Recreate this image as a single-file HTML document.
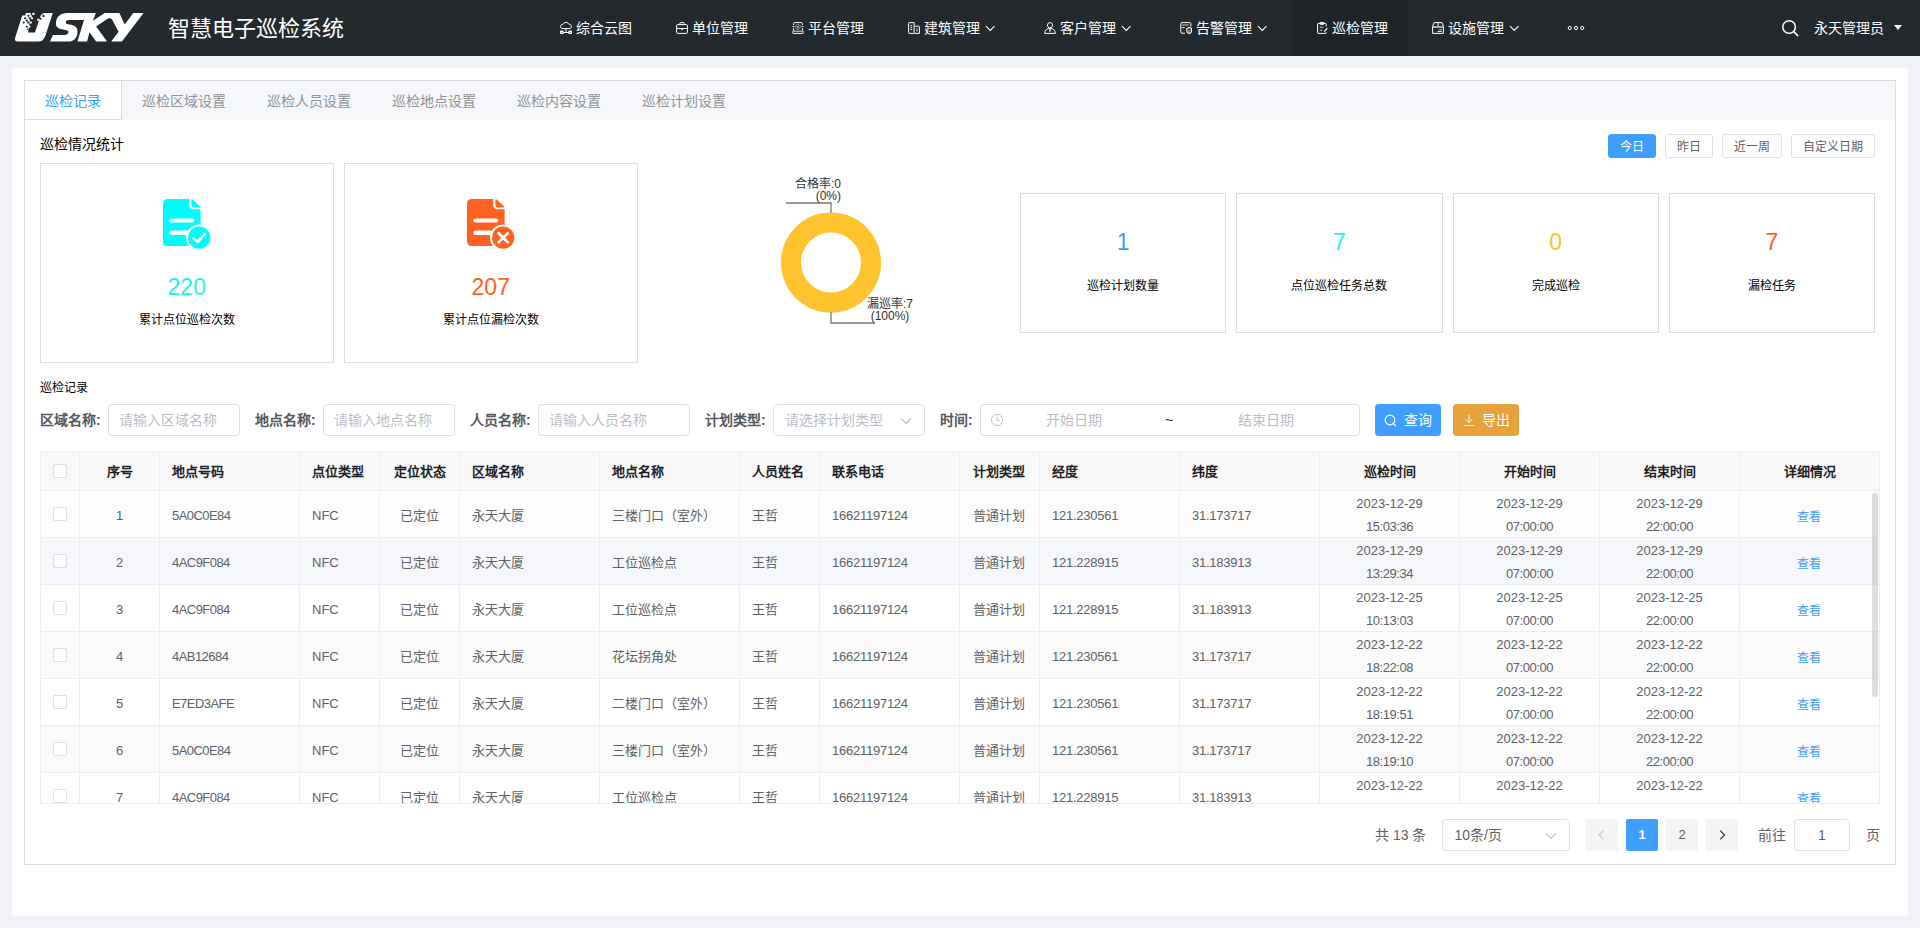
<!DOCTYPE html>
<html lang="zh-CN">
<head>
<meta charset="utf-8">
<title>智慧电子巡检系统</title>
<style>
*{box-sizing:border-box;margin:0;padding:0}
html,body{width:1920px;height:928px;overflow:hidden}
body{font-family:"Liberation Sans",sans-serif;font-size:14px;color:#606266;background:#f0f2f5;position:relative}
svg{display:block}
/* ---------- header ---------- */
.hdr{position:absolute;left:0;top:0;width:1920px;height:56px;background:#24292e}
.logo{position:absolute;left:0;top:0}
.sys{position:absolute;left:168px;top:0;height:56px;line-height:57px;font-size:22px;color:#fff;white-space:nowrap}
.nav{position:absolute;left:536px;top:0;height:56px;display:flex}
.mi{height:56px;line-height:56px;padding:0 20px;color:#fff;font-size:14px;display:flex;align-items:center;white-space:nowrap}
.mi.act{background:#1f2428}
.mi{flex:none;width:116px;overflow:hidden}
.mi.sub{width:136px}
.mi .tx{flex:none;width:56px;overflow:visible}
.mi .ic,.mi .ar{flex:none}
.mi .ic{width:20px;height:12px;display:flex;align-items:center;justify-content:center}
.mi .ar{margin-left:4px;width:16px;height:16px}
.srch{position:absolute;left:1781px;top:19px}
.usr{position:absolute;left:1814px;top:0;height:56px;line-height:56px;color:#fff;font-size:14px;white-space:nowrap}
.caret{position:absolute;left:1894px;top:25px;width:0;height:0;border-left:4px solid transparent;border-right:4px solid transparent;border-top:5px solid #fff}

.fl{top:404px;height:32px;line-height:32px;font-size:14px;font-weight:bold;color:#55585d;white-space:nowrap}
.inp{top:404px;height:32px;border:1px solid #dcdfe6;border-radius:4px;background:#fff;line-height:30px;font-size:14px;color:#babec7;padding-left:9.5px;white-space:nowrap}
.btn{top:404px;height:32px;border-radius:4px;color:#fff;font-size:14px;line-height:32px;white-space:nowrap}
.btn span{position:absolute;top:0}
.btn svg{position:absolute}
/* table */
.tbl{left:40px;top:451px;width:1840px;height:353px;border:1px solid #ebeef5;border-right:none;overflow:hidden;background:#fff}
.tr{display:flex;height:47px;border-bottom:1px solid #ebeef5;font-size:13px;color:#606266}
.tr.h{height:39px;background:#f8f8f9;color:#1f2225;font-weight:bold}
.tr.s{background:#fafafa}
.tr:not(.h) .cb{position:relative;top:-1px}
.tr:not(.h)>div{padding-top:2px}
.tr>div{flex:none;border-right:1px solid #ebeef5;height:100%;display:flex;align-items:center;padding:0 12px;white-space:nowrap;line-height:23px}
.tr>div.ce{justify-content:center;text-align:center;padding-left:0;padding-right:0}
.tr>div.dt{flex-direction:column;justify-content:center;padding:2px 0 0}
.w40{width:39px}.w80{width:80px}.w140{width:140px}
.cb{width:14px;height:14px;border:1px solid #dcdfe6;border-radius:2px;background:#fff}
.lk{color:#409eff;font-size:12px;position:relative;top:2px;left:-1px}
.tm{letter-spacing:-.45px}.n1{letter-spacing:-.25px}.n2{letter-spacing:-.55px}
.sb{left:1872px;top:493px;width:6px;height:204px;border-radius:3px;background:rgba(144,147,153,.3)}
/* pagination */
.pg{top:819px;height:32px;line-height:32px;font-size:14px;color:#606266;white-space:nowrap}
.pb{top:819px;width:32px;height:32px;border-radius:2px;background:#f4f4f5;text-align:center;line-height:32px;font-size:13px;color:#606266}
/* ---------- page ---------- */
.page{position:absolute;left:12px;top:68px;width:1896px;height:848px;background:#fff}
.tabs{position:absolute;left:12px;top:12px;width:1872px;height:785px;border:1px solid #dcdcdc;background:#fff}
.thead{height:39px;background:#f5f7fa;display:flex}
.tab{height:40px;line-height:40px;padding:0 20px;margin-top:-1px;font-size:14px;color:#909399;border:1px solid transparent;white-space:nowrap}
.tab:first-child{margin-left:-1px}
.tab+.tab{margin-left:-1px}
.tab{flex:none;width:126px;overflow:hidden}
.tab.on{width:98px}
.tab.on{color:#409eff;background:#fff;border-color:#dcdcdc}

/* ---------- body (page coords) ---------- */
.c{position:absolute;left:-25px;top:-81px;width:0;height:0}
.c>*{position:absolute;white-space:nowrap}
.t14{font-size:14px;color:#000;line-height:20px;white-space:nowrap}
.t12{font-size:12px;color:#000;line-height:16px;white-space:nowrap}
.dbtn{top:134px;height:24px;line-height:24px;font-size:12px;text-align:center;border:1px solid #dcdfe6;border-radius:3px;background:#fff;color:#606266;white-space:nowrap}
.dbtn.pri{background:#409eff;border-color:#409eff;color:#fff}
.card{border:1px solid #ddd;background:#fff}
.big{top:163px;width:293.5px;height:200px}
.big .num{position:absolute;left:0;width:100%;top:271px;text-align:center;font-size:23px;line-height:30px}
.big svg{position:absolute;left:121px;top:34px}
.big .num{top:108px}
.big .lab{position:absolute;left:0;width:100%;top:148px;text-align:center;font-size:12px;line-height:16px;color:#000}
.sm{top:193px;width:206.25px;height:140px}
.sm .num{position:absolute;left:0;width:100%;top:33px;text-align:center;font-size:23px;line-height:30px}
.sm .lab{position:absolute;left:0;width:100%;top:84px;text-align:center;font-size:12px;line-height:16px;color:#000}
.pl{font-size:12px;line-height:12px;color:#333;white-space:nowrap}

</style>
</head>
<body>
<div class="hdr">
  <svg class="logo" width="160" height="56" viewBox="0 0 160 56">
    <g fill="#fff">
      <path fill-rule="evenodd" d="M26 13H52.8L45.3 36Q43.6 41.6 38 41.6H18.1Q13.6 41.6 15.4 37L22.2 15.4H25.3Z M30.9 13H41.6L34.9 32.6H28.1Z"/>
      <path d="M89 13H67.5C60 13 56.5 17 56 22.5C55.6 27 58 28.6 62 29.3L66.5 30.2C68.5 30.6 68.6 31.6 68.4 32.6C68 34.4 66.5 34.9 64.5 34.9H53L50 41.6H68C75 41.6 77.5 37 77.5 31.5C77.5 27 74.5 25.5 71 24.8L67.6 24.2C66 23.9 65.6 23 65.8 22C66.1 20.5 67.3 20 69 20H86.5Z"/>
      <path d="M86.2 13H95.9L92.8 20.8L104.7 13H119.4L124.7 24.4L133.3 13H143.6L121.9 41.5H111.2L118.6 31.8L112 19.5Q110.5 17.6 108 18.6L96.1 26.4L107.1 41.5H96.1L89.5 32.2L87.1 41.5H77.4Z"/>
    </g>
    <g fill="#24292e"><rect x="27.45" y="14.85" width="1.9" height="1.9" rx=".35"/><rect x="24.20" y="17.25" width="1.9" height="1.9" rx=".35"/><rect x="28.70" y="17.25" width="1.9" height="1.9" rx=".35"/><rect x="25.85" y="19.55" width="1.9" height="1.9" rx=".35"/><rect x="22.75" y="21.55" width="1.9" height="1.9" rx=".35"/><rect x="27.25" y="21.55" width="1.9" height="1.9" rx=".35"/><rect x="25.85" y="25.65" width="1.9" height="1.9" rx=".35"/><rect x="27.05" y="28.55" width="1.3" height="1.3" rx=".35"/><rect x="30.90" y="13.20" width="1.4" height="1.4" rx=".35"/><rect x="42.50" y="15.00" width="2.0" height="2.0" rx=".35"/><rect x="39.40" y="17.80" width="2.0" height="2.0" rx=".35"/><path d="M41.2 13H43.4L42.2 14.6L40.6 14.9Z"/></g>
    <g fill="#fff"><rect x="32.30" y="12.80" width="2.2" height="2.2" rx=".35"/><rect x="29.80" y="15.20" width="2.0" height="2.0" rx=".35"/><rect x="31.00" y="17.20" width="2.0" height="2.0" rx=".35"/><rect x="29.80" y="21.50" width="2.0" height="2.0" rx=".35"/><rect x="28.40" y="25.60" width="2.0" height="2.0" rx=".35"/><rect x="37.25" y="18.75" width="2.1" height="2.1" rx=".35"/></g>
  </svg>
  <div class="sys">智慧电子巡检系统</div>
  <div class="nav">
    <div class="mi"><span class="ic"><svg width="12" height="12" viewBox="0 0 12 12" fill="none" stroke="#fff" stroke-width="1" stroke-linejoin="round"><path d="M3 6.6C1.4 6.6 .5 5.6 .5 4.4C.5 3.1 1.6 2.3 2.8 2.4C3.3 1.2 4.5 .5 6 .5C7.5 .5 8.7 1.2 9.2 2.4C10.4 2.3 11.5 3.1 11.5 4.4C11.5 5.6 10.6 6.6 9 6.6Z"/><path d="M6 6.6V10.5M3 10.5H9" /><rect x=".5" y="9" width="2.6" height="2.6" fill="#fff"/><rect x="8.9" y="9" width="2.6" height="2.6" fill="#fff"/><circle cx="1.8" cy="10.3" r=".6" fill="#24292e" stroke="none"/><circle cx="10.2" cy="10.3" r=".6" fill="#24292e" stroke="none"/></svg></span><span class="tx">综合云图</span></div>
    <div class="mi"><span class="ic"><svg width="12" height="12" viewBox="0 0 12 12" fill="none" stroke="#fff" stroke-width="1" stroke-linejoin="round"><rect x=".6" y="2.6" width="10.8" height="8.8" rx="1"/><path d="M3.8 2.6V1.4Q3.8 .6 4.6 .6H7.4Q8.2 .6 8.2 1.4V2.6M.6 6.5H11.4M4.8 6.7Q6 8.8 7.2 6.7" /></svg></span><span class="tx">单位管理</span></div>
    <div class="mi"><span class="ic"><svg width="12" height="12" viewBox="0 0 12 12" fill="none" stroke="#fff" stroke-width="1" stroke-linejoin="round"><path d="M1.6 3V1.4Q1.6 .6 2.4 .6H9.6Q10.4 .6 10.4 1.4V3M.5 4.6H2.4M9.6 4.6H11.5M1.6 6.2V8.6M10.4 6.2V8.6M1.4 8.4L.6 10.4Q.4 11.4 1.4 11.4H10.6Q11.6 11.4 11.4 10.4L10.6 8.4"/><circle cx="6" cy="4.8" r="2.4" stroke-dasharray="1 .7" stroke-width=".9"/><circle cx="6" cy="4.8" r=".9" fill="#fff" stroke="none"/><rect x="2" y="8.6" width="8" height="1.4" fill="#aaa" stroke="none"/></svg></span><span class="tx">平台管理</span></div>
    <div class="mi sub"><span class="ic"><svg width="12" height="12" viewBox="0 0 12 12" fill="none" stroke="#fff" stroke-width="1" stroke-linejoin="round"><rect x=".6" y=".6" width="5.8" height="10.8" rx=".6"/><path d="M6.4 4.2H10.6Q11.4 4.2 11.4 5V11.4H6.4"/><path d="M2.4 3.6H4.2M2.4 5.6H4.2M2.4 7.6H4.2" stroke-width="1"/><rect x="8.2" y="6.4" width="1.6" height="3" fill="#999" stroke="none"/><rect x="5.4" y="1" width="1.6" height="10" fill="#aaa" stroke="none"/></svg></span><span class="tx">建筑管理</span><span class="ar"><svg width="16" height="16" viewBox="0 0 16 16" fill="none" stroke="#fff" stroke-width="1.1"><path d="M2 6.2L6.25 10.4L10.5 6.2"/></svg></span></div>
    <div class="mi sub"><span class="ic"><svg width="12" height="12" viewBox="0 0 12 12" fill="none" stroke="#fff" stroke-width="1" stroke-linejoin="round"><circle cx="6" cy="3.2" r="2.6"/><path d="M.6 11.4C.6 8.4 2.8 6.4 6 6.4C9.2 6.4 11.4 8.4 11.4 11.4Z"/><path d="M6 7V9.8" stroke-width="1.3"/></svg></span><span class="tx">客户管理</span><span class="ar"><svg width="16" height="16" viewBox="0 0 16 16" fill="none" stroke="#fff" stroke-width="1.1"><path d="M2 6.2L6.25 10.4L10.5 6.2"/></svg></span></div>
    <div class="mi sub"><span class="ic"><svg width="12" height="12" viewBox="0 0 12 12" fill="none" stroke="#fff" stroke-width="1" stroke-linejoin="round"><path d="M5 11.2H2Q.8 11.2 .8 10V1.8Q.8 .6 2 .6H9.6Q10.8 .6 10.8 1.8V4.6"/><path d="M2.2 3H8.6" stroke="#aaa" stroke-width="1.3"/><path d="M2.2 5.6H4.6"/><path d="M9.2 5.4L11.6 6.4V8.8Q11.6 10.8 9.2 11.6Q6.8 10.8 6.8 8.8V6.4Z" stroke-width="1.1"/><path d="M8.2 8.6L9 9.4L10.3 7.9" stroke-width=".9"/></svg></span><span class="tx">告警管理</span><span class="ar"><svg width="16" height="16" viewBox="0 0 16 16" fill="none" stroke="#fff" stroke-width="1.1"><path d="M2 6.2L6.25 10.4L10.5 6.2"/></svg></span></div>
    <div class="mi act"><span class="ic"><svg width="12" height="12" viewBox="0 0 12 12" fill="none" stroke="#fff" stroke-width="1" stroke-linejoin="round"><path d="M10.2 4.4V2Q10.2 1.4 9.6 1.4H2.2Q1.6 1.4 1.6 2V10.8Q1.6 11.4 2.2 11.4H9.6Q10.2 11.4 10.2 10.8V10"/><rect x="3.8" y=".5" width="4.2" height="1.9" rx=".9"/><path d="M3.8 5.2H7.4M3.8 8.2H6.4" stroke="#ccc"/><path d="M8.2 9.6L11.3 6.2" stroke-width="1.2"/></svg></span><span class="tx">巡检管理</span></div>
    <div class="mi sub"><span class="ic"><svg width="12" height="12" viewBox="0 0 12 12" fill="none" stroke="#fff" stroke-width="1" stroke-linejoin="round"><path d="M.6 4.2L2 .6H10L11.4 4.2V11.4H.6Z"/><path d="M6 .6V4.2" /><rect x="1" y="4.2" width="10" height="1.6" fill="#ccc" stroke="none"/><path d="M7.4 7.6H9.6" stroke="#ccc"/><path d="M5.6 9.4H9.8"/></svg></span><span class="tx">设施管理</span><span class="ar"><svg width="16" height="16" viewBox="0 0 16 16" fill="none" stroke="#fff" stroke-width="1.1"><path d="M2 6.2L6.25 10.4L10.5 6.2"/></svg></span></div>
    <div class="mi"><svg width="24" height="12" viewBox="0 0 24 12" fill="none" stroke="#fff" stroke-width="1"><circle cx="5.8" cy="6" r="1.6"/><circle cx="12" cy="6" r="1.6"/><circle cx="18.2" cy="6" r="1.6"/></svg></div>
  </div>
  <svg class="srch" width="18" height="18" viewBox="0 0 18 18" fill="none" stroke="#fff" stroke-width="1.5"><circle cx="8.1" cy="8" r="6.3"/><path d="M12.7 12.6L16.7 16.6" stroke-linecap="round"/></svg>
  <div class="usr">永天管理员</div>
  <div class="caret"></div>
</div>

<div class="page">
 <div class="tabs">
  <div class="thead">
    <div class="tab on">巡检记录</div>
    <div class="tab">巡检区域设置</div>
    <div class="tab">巡检人员设置</div>
    <div class="tab">巡检地点设置</div>
    <div class="tab">巡检内容设置</div>
    <div class="tab">巡检计划设置</div>
  </div>
  <div class="c">
   <div class="t14" style="left:40px;top:134px">巡检情况统计</div>
   <div class="dbtn pri" style="left:1608px;width:48px">今日</div>
   <div class="dbtn" style="left:1665px;width:48px">昨日</div>
   <div class="dbtn" style="left:1722px;width:60px">近一周</div>
   <div class="dbtn" style="left:1791px;width:84px">自定义日期</div>

   <div class="card big" style="left:40px"><svg width="50" height="54" viewBox="0 0 50 54">
      <path d="M6 1H27.2V6.5Q27.2 11.2 32 11.2H38.6V43Q38.6 48 33.6 48H6Q1 48 1 43V6Q1 1 6 1Z" fill="#00fbfb"/>
      <path d="M29.4 1.2Q30.6 1.2 31.6 2.2L37.6 8Q38.4 8.9 38.4 9.4H32Q29.4 9.4 29.4 6.8Z" fill="#00fbfb"/>
      <rect x="7.2" y="20.4" width="25" height="4.2" rx="2.1" fill="#fff"/>
      <rect x="7.2" y="32.4" width="20" height="4.6" rx="2.3" fill="#fff"/>
      <circle cx="37.2" cy="39.7" r="13.2" fill="#fff"/>
      <circle cx="37.2" cy="39.7" r="11.1" fill="#00fbfb"/>
      <path d="M31.7 40.1L35.5 43.9L42.7 36.1" fill="none" stroke="#fff" stroke-width="2.6" stroke-linecap="round" stroke-linejoin="round"/>
    </svg><div class="num" style="color:#1ef0f4">220</div><div class="lab">累计点位巡检次数</div></div>
   <div class="card big" style="left:344px"><svg width="50" height="54" viewBox="0 0 50 54">
      <path d="M6 1H27.2V6.5Q27.2 11.2 32 11.2H38.6V43Q38.6 48 33.6 48H6Q1 48 1 43V6Q1 1 6 1Z" fill="#ff6120"/>
      <path d="M29.4 1.2Q30.6 1.2 31.6 2.2L37.6 8Q38.4 8.9 38.4 9.4H32Q29.4 9.4 29.4 6.8Z" fill="#ff6120"/>
      <rect x="7.2" y="20.4" width="25" height="4.2" rx="2.1" fill="#fff"/>
      <rect x="7.2" y="32.4" width="20" height="4.6" rx="2.3" fill="#fff"/>
      <circle cx="37.2" cy="39.7" r="13.2" fill="#fff"/>
      <circle cx="37.2" cy="39.7" r="11.1" fill="#ff6120"/>
      <path d="M32.7 35.2L41.7 44.2M41.7 35.2L32.7 44.2" fill="none" stroke="#fff" stroke-width="2.8" stroke-linecap="round"/>
    </svg><div class="num" style="color:#ff6120">207</div><div class="lab">累计点位漏检次数</div></div>

   <svg style="left:760px;top:170px" width="180" height="170" viewBox="760 170 180 170">
     <circle cx="831" cy="262.6" r="40" fill="none" stroke="#fec32f" stroke-width="20"/>
     <path d="M831 213V203H786M831 312V323H875" fill="none" stroke="#777" stroke-width="1.3"/>
   </svg>
   <div class="pl" style="left:741px;width:100px;top:178px;text-align:right">合格率:0</div>
   <div class="pl" style="left:741px;width:100px;top:190px;text-align:right">(0%)</div>
   <div class="pl" style="left:840px;width:100px;top:298px;text-align:center">漏巡率:7</div>
   <div class="pl" style="left:840px;width:100px;top:310px;text-align:center">(100%)</div>

   <div class="card sm" style="left:1020px"><div class="num" style="color:#409eff">1</div><div class="lab">巡检计划数量</div></div>
   <div class="card sm" style="left:1236.25px"><div class="num" style="color:#1ef0f4">7</div><div class="lab">点位巡检任务总数</div></div>
   <div class="card sm" style="left:1452.5px"><div class="num" style="color:#fdbf2d">0</div><div class="lab">完成巡检</div></div>
   <div class="card sm" style="left:1668.75px"><div class="num" style="color:#ff6120">7</div><div class="lab">漏检任务</div></div>
   <div class="t12" style="left:40px;top:379.5px">巡检记录</div>
   <div class="fl" style="left:40px">区域名称:</div><div class="inp" style="left:108px;width:132px">请输入区域名称</div>
   <div class="fl" style="left:255px">地点名称:</div><div class="inp" style="left:323px;width:132px">请输入地点名称</div>
   <div class="fl" style="left:470px">人员名称:</div><div class="inp" style="left:538px;width:152px">请输入人员名称</div>
   <div class="fl" style="left:705px">计划类型:</div><div class="inp" style="left:773px;width:152px;padding-left:10.5px">请选择计划类型</div>
   <svg style="left:900px;top:417px" width="12" height="8" viewBox="0 0 12 8" fill="none" stroke="#c0c4cc" stroke-width="1.1"><path d="M1 1.5L6 6.5L11 1.5"/></svg>
   <div class="fl" style="left:940px">时间:</div><div class="inp" style="left:980px;width:380px"></div>
   <svg style="left:990px;top:413px" width="14" height="14" viewBox="0 0 14 14" fill="none" stroke="#c0c4cc" stroke-width="1"><circle cx="7" cy="7" r="5.6"/><path d="M7 3.8V7.4H9.8"/></svg>
   <div style="left:1046px;top:404px;line-height:32px;font-size:14px;color:#babec7">开始日期</div>
   <div style="left:1165px;top:404px;line-height:32px;font-size:14px;color:#303133">~</div>
   <div style="left:1238px;top:404px;line-height:32px;font-size:14px;color:#babec7">结束日期</div>
   <div class="btn" style="left:1375px;width:66px;background:#409eff"><svg style="left:9px;top:10px" width="13" height="13" viewBox="0 0 13 13" fill="none" stroke="#fff" stroke-width="1.2"><circle cx="6" cy="6" r="4.8"/><path d="M9.6 9.6L11.6 11.6" stroke-linecap="round"/></svg><span style="left:29px">查询</span></div>
   <div class="btn" style="left:1453px;width:66px;background:#e6a23c"><svg style="left:10px;top:10px" width="12" height="13" viewBox="0 0 12 13" fill="none" stroke="#fff" stroke-width="1"><path d="M6 1V8.4M2.6 5.2L6 8.6L9.4 5.2"/><path d="M1 11.6H11" stroke-opacity=".8"/></svg><span style="left:29px">导出</span></div>

   <div class="tbl">
    <div class="tr h"><div class="w40 ce"><span class="cb"></span></div><div class="w80 ce">序号</div><div class="w140">地点号码</div><div class="w80">点位类型</div><div class="w80 ce">定位状态</div><div class="w140">区域名称</div><div class="w140">地点名称</div><div class="w80">人员姓名</div><div class="w140">联系电话</div><div class="w80 ce" style="padding-right:2px">计划类型</div><div class="w140">经度</div><div class="w140">纬度</div><div class="w140 ce">巡检时间</div><div class="w140 ce">开始时间</div><div class="w140 ce">结束时间</div><div class="w140 ce">详细情况</div></div>
    <div class="tr" style="background:#fcfcfc"><div class="w40 ce"><span class="cb"></span></div><div class="w80 ce">1</div><div class="w140 n2">5A0C0E84</div><div class="w80" style="padding-left:12px">NFC</div><div class="w80 ce">已定位</div><div class="w140">永天大厦</div><div class="w140">三楼门口（室外）</div><div class="w80">王哲</div><div class="w140 n1">16621197124</div><div class="w80 ce" style="padding-right:2px">普通计划</div><div class="w140 n1">121.230561</div><div class="w140 n1">31.173717</div><div class="w140 dt"><span>2023-12-29</span><span class="tm">15:03:36</span></div><div class="w140 dt"><span>2023-12-29</span><span class="tm">07:00:00</span></div><div class="w140 dt"><span>2023-12-29</span><span class="tm">22:00:00</span></div><div class="w140 ce"><span class="lk">查看</span></div></div>
    <div class="tr s" style="background:#f5f7fa"><div class="w40 ce"><span class="cb"></span></div><div class="w80 ce">2</div><div class="w140 n2">4AC9F084</div><div class="w80" style="padding-left:12px">NFC</div><div class="w80 ce">已定位</div><div class="w140">永天大厦</div><div class="w140">工位巡检点</div><div class="w80">王哲</div><div class="w140 n1">16621197124</div><div class="w80 ce" style="padding-right:2px">普通计划</div><div class="w140 n1">121.228915</div><div class="w140 n1">31.183913</div><div class="w140 dt"><span>2023-12-29</span><span class="tm">13:29:34</span></div><div class="w140 dt"><span>2023-12-29</span><span class="tm">07:00:00</span></div><div class="w140 dt"><span>2023-12-29</span><span class="tm">22:00:00</span></div><div class="w140 ce"><span class="lk">查看</span></div></div>
    <div class="tr"><div class="w40 ce"><span class="cb"></span></div><div class="w80 ce">3</div><div class="w140 n2">4AC9F084</div><div class="w80" style="padding-left:12px">NFC</div><div class="w80 ce">已定位</div><div class="w140">永天大厦</div><div class="w140">工位巡检点</div><div class="w80">王哲</div><div class="w140 n1">16621197124</div><div class="w80 ce" style="padding-right:2px">普通计划</div><div class="w140 n1">121.228915</div><div class="w140 n1">31.183913</div><div class="w140 dt"><span>2023-12-25</span><span class="tm">10:13:03</span></div><div class="w140 dt"><span>2023-12-25</span><span class="tm">07:00:00</span></div><div class="w140 dt"><span>2023-12-25</span><span class="tm">22:00:00</span></div><div class="w140 ce"><span class="lk">查看</span></div></div>
    <div class="tr s"><div class="w40 ce"><span class="cb"></span></div><div class="w80 ce">4</div><div class="w140 n2">4AB12684</div><div class="w80" style="padding-left:12px">NFC</div><div class="w80 ce">已定位</div><div class="w140">永天大厦</div><div class="w140">花坛拐角处</div><div class="w80">王哲</div><div class="w140 n1">16621197124</div><div class="w80 ce" style="padding-right:2px">普通计划</div><div class="w140 n1">121.230561</div><div class="w140 n1">31.173717</div><div class="w140 dt"><span>2023-12-22</span><span class="tm">18:22:08</span></div><div class="w140 dt"><span>2023-12-22</span><span class="tm">07:00:00</span></div><div class="w140 dt"><span>2023-12-22</span><span class="tm">22:00:00</span></div><div class="w140 ce"><span class="lk">查看</span></div></div>
    <div class="tr"><div class="w40 ce"><span class="cb"></span></div><div class="w80 ce">5</div><div class="w140 n2">E7ED3AFE</div><div class="w80" style="padding-left:12px">NFC</div><div class="w80 ce">已定位</div><div class="w140">永天大厦</div><div class="w140">二楼门口（室外）</div><div class="w80">王哲</div><div class="w140 n1">16621197124</div><div class="w80 ce" style="padding-right:2px">普通计划</div><div class="w140 n1">121.230561</div><div class="w140 n1">31.173717</div><div class="w140 dt"><span>2023-12-22</span><span class="tm">18:19:51</span></div><div class="w140 dt"><span>2023-12-22</span><span class="tm">07:00:00</span></div><div class="w140 dt"><span>2023-12-22</span><span class="tm">22:00:00</span></div><div class="w140 ce"><span class="lk">查看</span></div></div>
    <div class="tr s"><div class="w40 ce"><span class="cb"></span></div><div class="w80 ce">6</div><div class="w140 n2">5A0C0E84</div><div class="w80" style="padding-left:12px">NFC</div><div class="w80 ce">已定位</div><div class="w140">永天大厦</div><div class="w140">三楼门口（室外）</div><div class="w80">王哲</div><div class="w140 n1">16621197124</div><div class="w80 ce" style="padding-right:2px">普通计划</div><div class="w140 n1">121.230561</div><div class="w140 n1">31.173717</div><div class="w140 dt"><span>2023-12-22</span><span class="tm">18:19:10</span></div><div class="w140 dt"><span>2023-12-22</span><span class="tm">07:00:00</span></div><div class="w140 dt"><span>2023-12-22</span><span class="tm">22:00:00</span></div><div class="w140 ce"><span class="lk">查看</span></div></div>
    <div class="tr"><div class="w40 ce"><span class="cb"></span></div><div class="w80 ce">7</div><div class="w140 n2">4AC9F084</div><div class="w80" style="padding-left:12px">NFC</div><div class="w80 ce">已定位</div><div class="w140">永天大厦</div><div class="w140">工位巡检点</div><div class="w80">王哲</div><div class="w140 n1">16621197124</div><div class="w80 ce" style="padding-right:2px">普通计划</div><div class="w140 n1">121.228915</div><div class="w140 n1">31.183913</div><div class="w140 dt"><span>2023-12-22</span><span class="tm">18:18:32</span></div><div class="w140 dt"><span>2023-12-22</span><span class="tm">07:00:00</span></div><div class="w140 dt"><span>2023-12-22</span><span class="tm">22:00:00</span></div><div class="w140 ce"><span class="lk">查看</span></div></div>
    <div class="tr s"><div class="w40 ce"><span class="cb"></span></div><div class="w80 ce">8</div><div class="w140 n2">4AB12684</div><div class="w80" style="padding-left:12px">NFC</div><div class="w80 ce">已定位</div><div class="w140">永天大厦</div><div class="w140">花坛拐角处</div><div class="w80">王哲</div><div class="w140 n1">16621197124</div><div class="w80 ce" style="padding-right:2px">普通计划</div><div class="w140 n1">121.230561</div><div class="w140 n1">31.173717</div><div class="w140 dt"><span>2023-12-22</span><span class="tm">18:17:40</span></div><div class="w140 dt"><span>2023-12-22</span><span class="tm">07:00:00</span></div><div class="w140 dt"><span>2023-12-22</span><span class="tm">22:00:00</span></div><div class="w140 ce"><span class="lk">查看</span></div></div>
   </div>
   <div class="sb"></div>

   <div class="pg" style="left:1375px">共 13 条</div>
   <div class="inp" style="left:1442px;top:819px;width:128px;color:#606266;font-size:14px;padding-left:11.5px">10条/页</div>
   <svg style="left:1545px;top:832px" width="12" height="8" viewBox="0 0 12 8" fill="none" stroke="#c0c4cc" stroke-width="1.1"><path d="M1 1.5L6 6.5L11 1.5"/></svg>
   <div class="pb" style="left:1586px"><svg style="margin:10px 0 0 11px" width="8" height="12" viewBox="0 0 8 12" fill="none" stroke="#c0c4cc" stroke-width="1.1"><path d="M6.4 1.6L2 6L6.4 10.4"/></svg></div>
   <div class="pb" style="left:1626px;background:#409eff;color:#fff;font-weight:bold">1</div>
   <div class="pb" style="left:1666px">2</div>
   <div class="pb" style="left:1706px"><svg style="margin:10px 0 0 13px" width="8" height="12" viewBox="0 0 8 12" fill="none" stroke="#303133" stroke-width="1.1"><path d="M1.2 1.6L5.6 6L1.2 10.4"/></svg></div>
   <div class="pg" style="left:1758px;font-size:14px">前往</div>
   <div class="inp" style="left:1794px;top:819px;width:56px;padding:0;text-align:center;color:#606266;font-size:14px">1</div>
   <div class="pg" style="left:1866px;font-size:14px">页</div>

  </div>
 </div>
</div>
</body>
</html>
